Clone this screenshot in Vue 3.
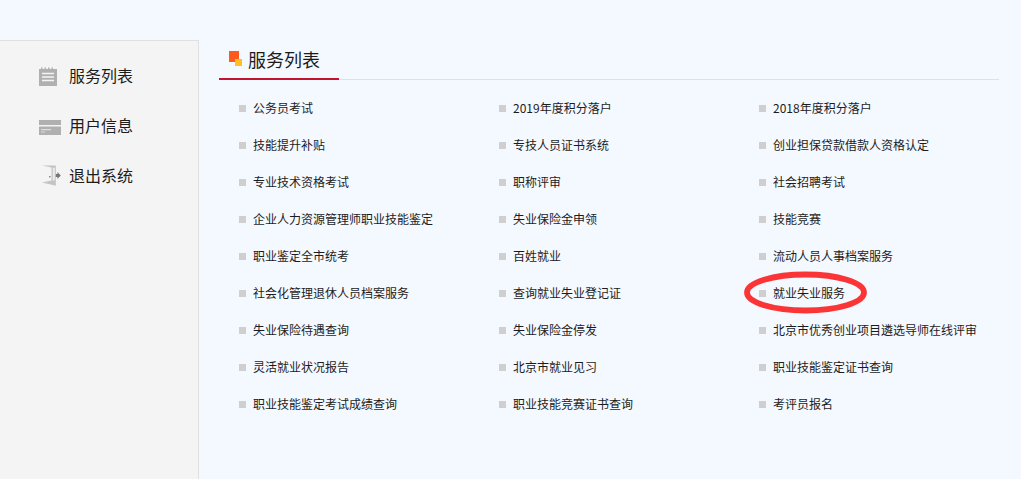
<script setup>
const menu = [
  { label: '服务列表', icon: 'list' },
  { label: '用户信息', icon: 'card' },
  { label: '退出系统', icon: 'exit' }
]
const services = [
  '公务员考试', '2019年度积分落户', '2018年度积分落户',
  '技能提升补贴', '专技人员证书系统', '创业担保贷款借款人资格认定',
  '专业技术资格考试', '职称评审', '社会招聘考试',
  '企业人力资源管理师职业技能鉴定', '失业保险金申领', '技能竞赛',
  '职业鉴定全市统考', '百姓就业', '流动人员人事档案服务',
  '社会化管理退休人员档案服务', '查询就业失业登记证', '就业失业服务',
  '失业保险待遇查询', '失业保险金停发', '北京市优秀创业项目遴选导师在线评审',
  '灵活就业状况报告', '北京市就业见习', '职业技能鉴定证书查询',
  '职业技能鉴定考试成绩查询', '职业技能竞赛证书查询', '考评员报名'
]
</script>

<template>
  <div class="page">
    <aside class="side">
      <div v-for="m in menu" :key="m.label" class="side-item">
        <span class="side-icon">
          <svg v-if="m.icon === 'list'" class="ic-list" width="18" height="19" viewBox="0 0 18 19">
            <path d="M0 2h2V0.5h1.5V2h2V0.5H7V2h2V0.5h1.5V2h2V0.5H14V2h4v17H0z" fill="#b0b0b0"/>
            <path d="M3 6.5h12M3 10h12M3 13.5h12" stroke="#f4f4f4" stroke-width="1.4"/>
          </svg>
          <svg v-else-if="m.icon === 'card'" class="ic-card" width="22" height="15" viewBox="0 0 22 15">
            <rect x="0" y="0" width="22" height="5" fill="#b0b0b0"/>
            <rect x="0" y="6.5" width="22" height="8.5" fill="#b0b0b0"/>
            <path d="M2 9h10v1.2H2zM2 11.4h4v1.2H2z" fill="#dcdcdc"/>
          </svg>
          <svg v-else class="ic-exit" width="20" height="21" viewBox="0 0 20 21">
            <path d="M1 0.6H14.8V20.8L1 17.4L10.5 15.5V2.4z" fill="#c4c4c4"/>
            <path d="M11.8 3v12.8l2-.6V2.6z" fill="#ececec"/>
            <rect x="8" y="11" width="1.6" height="1.4" fill="#888"/>
            <path d="M14.8 8.9h1.6V7l3.4 3.5l-3.4 3.5v-1.9h-1.6z" fill="#777"/>
          </svg>
        </span>
        <span class="side-label">{{ m.label }}</span>
      </div>
    </aside>

    <main class="main">
      <header class="head">
        <div class="head-tab">
          <span class="mark"><i class="mark-a"></i><i class="mark-b"></i></span>
          <span class="head-title">服务列表</span>
        </div>
      </header>
      <ul class="grid">
        <li v-for="s in services" :key="s" class="cell">
          <i class="dot"></i>
          <span class="cell-text">{{ s }}</span>
        </li>
      </ul>
    </main>

    <svg class="circle" width="130" height="50" viewBox="0 0 130 50">
      <ellipse cx="64.5" cy="24.5" rx="58.5" ry="18" fill="none" stroke="#fb3535" stroke-width="5.8"/>
    </svg>
  </div>
</template>

<style scoped>
.page {
  position: relative;
  width: 1021px;
  height: 479px;
  padding-top: 40px;
  box-sizing: border-box;
  display: flex;
  background: #f4f8ff;
  overflow: hidden;
  font-family: "Noto Sans CJK SC", "Noto Sans", sans-serif;
  color: #1c1c1c;
}
.side {
  width: 199px;
  box-sizing: border-box;
  background: #f4f4f4;
  border-top: 1px solid #e0e0e0;
  border-right: 1px solid #e0e0e0;
  padding-top: 10px;
}
.side-item {
  height: 50px;
  display: flex;
  align-items: center;
  padding-left: 39px;
}
.side-icon {
  width: 30px;
  height: 30px;
  display: flex;
  align-items: center;
}
.ic-list { margin-top: 1px; }
.ic-card { margin-top: 3px; }
.ic-exit { margin-top: -1px; margin-left: 2px; }
.side-label {
  font-size: 16px;
  line-height: 20px;
  margin-top: -2px;
}
.main {
  width: 780px;
  margin-left: 20px;
}
.head {
  height: 40px;
  box-sizing: border-box;
  border-bottom: 1px solid #dde0e6;
}
.head-tab {
  width: 120px;
  height: 40px;
  box-sizing: border-box;
  border-bottom: 2px solid #c2142e;
  display: flex;
  align-items: center;
  padding-left: 10px;
  gap: 6px;
}
.mark {
  position: relative;
  width: 13px;
  height: 15px;
  margin-top: -2px;
}
.mark-a {
  position: absolute;
  left: 0;
  top: 0;
  width: 10px;
  height: 11px;
  background: #ff5a1e;
}
.mark-b {
  position: absolute;
  left: 6px;
  top: 8px;
  width: 7px;
  height: 7px;
  background: #ffc020;
}
.head-title {
  font-size: 18px;
  line-height: 24px;
  margin-top: -1px;
}
.grid {
  list-style: none;
  margin: 0;
  padding: 10px 0 0 20px;
  display: grid;
  grid-template-columns: repeat(3, 260px);
  grid-auto-rows: 37px;
}
.cell {
  display: flex;
  align-items: center;
  font-size: 12px;
  white-space: nowrap;
}
.cell-text {
  margin-top: -2px;
}
.dot {
  width: 7px;
  height: 7px;
  background: #cfcfcf;
  margin-right: 7px;
  flex: none;
}
.circle {
  position: absolute;
  left: 741px;
  top: 268px;
}
</style>
